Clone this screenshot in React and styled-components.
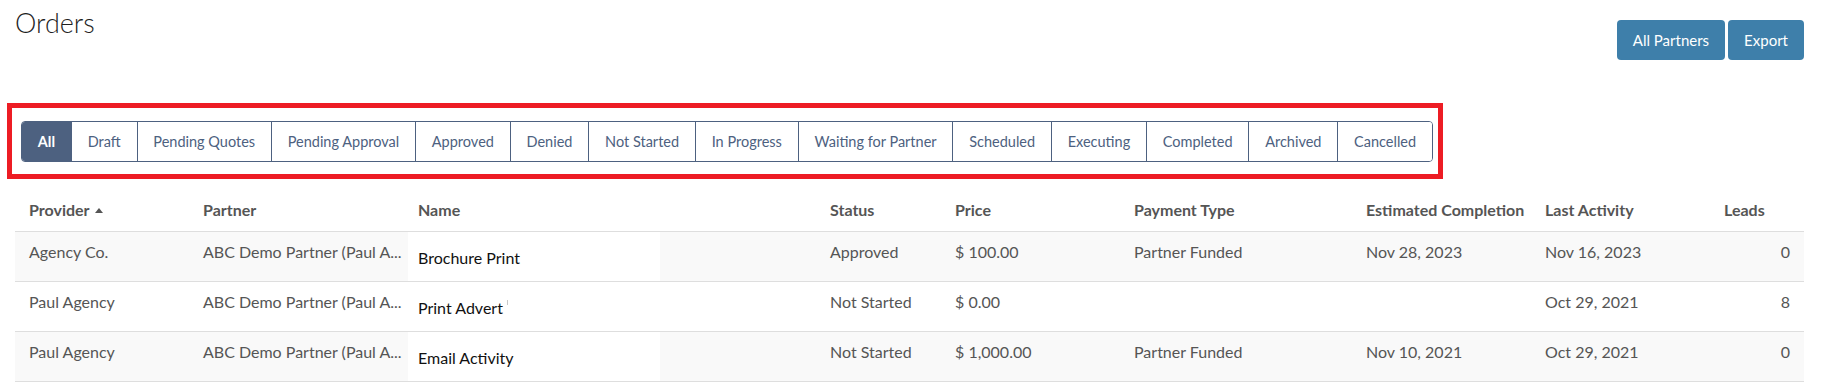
import React from 'react';
import styled, { createGlobalStyle } from 'styled-components';

const GlobalStyle = createGlobalStyle`
  html, body { margin: 0; padding: 0; background: #fff; }
  body { font-family: 'Lato', 'Liberation Sans', sans-serif; }
  * { box-sizing: border-box; }
`;

const Page = styled.div`
  width: 1824px;
  padding: 7px 20px 0 15px;
`;

const TopBar = styled.div`
  display: flex;
  justify-content: space-between;
  align-items: flex-start;
`;

const Title = styled.h1`
  margin: 0;
  font-family: 'Lato', sans-serif;
  font-weight: 300;
  font-size: 27px;
  line-height: 32px;
  color: #1f1f1f;
`;

const Actions = styled.div`
  display: flex;
  gap: 3px;
  margin-top: 13px;
`;

const ActionButton = styled.button`
  height: 40px;
  padding: 0 16px;
  border: 0;
  border-radius: 4px;
  background: #3e7faa;
  color: #fff;
  font-family: 'Lato', sans-serif;
  font-size: 15px;
  line-height: 18px;
  cursor: pointer;
`;

const Highlight = styled.div`
  display: flex;
  width: fit-content;
  margin: 43px 0 0 -8px;
  padding: 13px 5px 12px 9px;
  border: 5px solid #ed1c24;
`;

const TabGroup = styled.div`
  display: flex;
  border: 1px solid #4d6180;
  border-radius: 4px;
  overflow: hidden;
`;

const Tab = styled.button`
  height: 39px;
  padding: 0 15.8px;
  border: 0;
  border-left: 1px solid #4d6180;
  background: ${(p) => (p.$active ? '#4d6180' : '#fff')};
  color: ${(p) => (p.$active ? '#fff' : '#4d6180')};
  font-family: 'Lato', sans-serif;
  font-weight: ${(p) => (p.$active ? 700 : 400)};
  font-size: 14.5px;
  line-height: 18px;
  white-space: nowrap;
  cursor: pointer;
  &:first-child { border-left: 0; }
`;

const Table = styled.div`
  margin-top: 11px;
  width: 1789px;
`;

const COLS = '174px 215px 412px 125px 179px 232px 179px 179px 94px';

const Row = styled.div`
  display: grid;
  grid-template-columns: ${COLS};
  height: ${(p) => (p.$head ? '42px' : '50px')};
  border-bottom: 1px solid #dedede;
  background: ${(p) => (p.$striped ? '#f9f9f9' : '#fff')};
`;

const HeadCell = styled.div`
  padding: 10px 14px 0;
  font-family: 'Lato', sans-serif;
  font-weight: 700;
  font-size: 16px;
  line-height: 19px;
  color: #555;
  white-space: nowrap;
`;

const SortUp = styled.span`
  display: inline-block;
  margin-left: 5px;
  vertical-align: 3px;
  border-left: 4px solid transparent;
  border-right: 4px solid transparent;
  border-bottom: 5px solid #555;
`;

const Cell = styled.div`
  padding: 10px 14px 0;
  font-family: 'Lato', sans-serif;
  font-size: 16px;
  line-height: 19px;
  color: #555;
  white-space: nowrap;
  text-align: ${(p) => (p.$right ? 'right' : 'left')};
`;

const NameCell = styled.div`
  padding: 16px 14px 0;
  font-family: 'Lato', sans-serif;
  font-size: 16px;
  line-height: 19px;
  color: #111;
  white-space: nowrap;
  background: linear-gradient(
    to right,
    transparent 4px,
    #fff 4px,
    #fff 256px,
    transparent 256px
  );
`;

const Tick = styled.span`
  display: inline-block;
  width: 1px;
  height: 5px;
  margin-left: 4px;
  vertical-align: 9px;
  background: #c8c8c8;
`;

const tabs = [
  'All', 'Draft', 'Pending Quotes', 'Pending Approval', 'Approved', 'Denied',
  'Not Started', 'In Progress', 'Waiting for Partner', 'Scheduled', 'Executing',
  'Completed', 'Archived', 'Cancelled',
];

const orders = [
  { provider: 'Agency Co.', partner: 'ABC Demo Partner (Paul A...', name: 'Brochure Print', status: 'Approved', price: '$ 100.00', payment: 'Partner Funded', est: 'Nov 28, 2023', last: 'Nov 16, 2023', leads: 0 },
  { provider: 'Paul Agency', partner: 'ABC Demo Partner (Paul A...', name: 'Print Advert', tick: true, status: 'Not Started', price: '$ 0.00', payment: '', est: '', last: 'Oct 29, 2021', leads: 8 },
  { provider: 'Paul Agency', partner: 'ABC Demo Partner (Paul A...', name: 'Email Activity', status: 'Not Started', price: '$ 1,000.00', payment: 'Partner Funded', est: 'Nov 10, 2021', last: 'Oct 29, 2021', leads: 0 },
];

export default function App() {
  return (
    <>
      <GlobalStyle />
      <Page>
        <TopBar>
          <Title>Orders</Title>
          <Actions>
            <ActionButton>All Partners</ActionButton>
            <ActionButton>Export</ActionButton>
          </Actions>
        </TopBar>

        <Highlight>
          <TabGroup>
            {tabs.map((t, i) => (
              <Tab key={t} $active={i === 0}>{t}</Tab>
            ))}
          </TabGroup>
        </Highlight>

        <Table>
          <Row $head>
            <HeadCell>Provider<SortUp /></HeadCell>
            <HeadCell>Partner</HeadCell>
            <HeadCell>Name</HeadCell>
            <HeadCell>Status</HeadCell>
            <HeadCell>Price</HeadCell>
            <HeadCell>Payment Type</HeadCell>
            <HeadCell>Estimated Completion</HeadCell>
            <HeadCell>Last Activity</HeadCell>
            <HeadCell>Leads</HeadCell>
          </Row>
          {orders.map((o, i) => (
            <Row key={i} $striped={i % 2 === 0}>
              <Cell>{o.provider}</Cell>
              <Cell>{o.partner}</Cell>
              <NameCell>{o.name}{o.tick && <Tick />}</NameCell>
              <Cell>{o.status}</Cell>
              <Cell>{o.price}</Cell>
              <Cell>{o.payment}</Cell>
              <Cell>{o.est}</Cell>
              <Cell>{o.last}</Cell>
              <Cell $right>{o.leads}</Cell>
            </Row>
          ))}
        </Table>
      </Page>
    </>
  );
}
